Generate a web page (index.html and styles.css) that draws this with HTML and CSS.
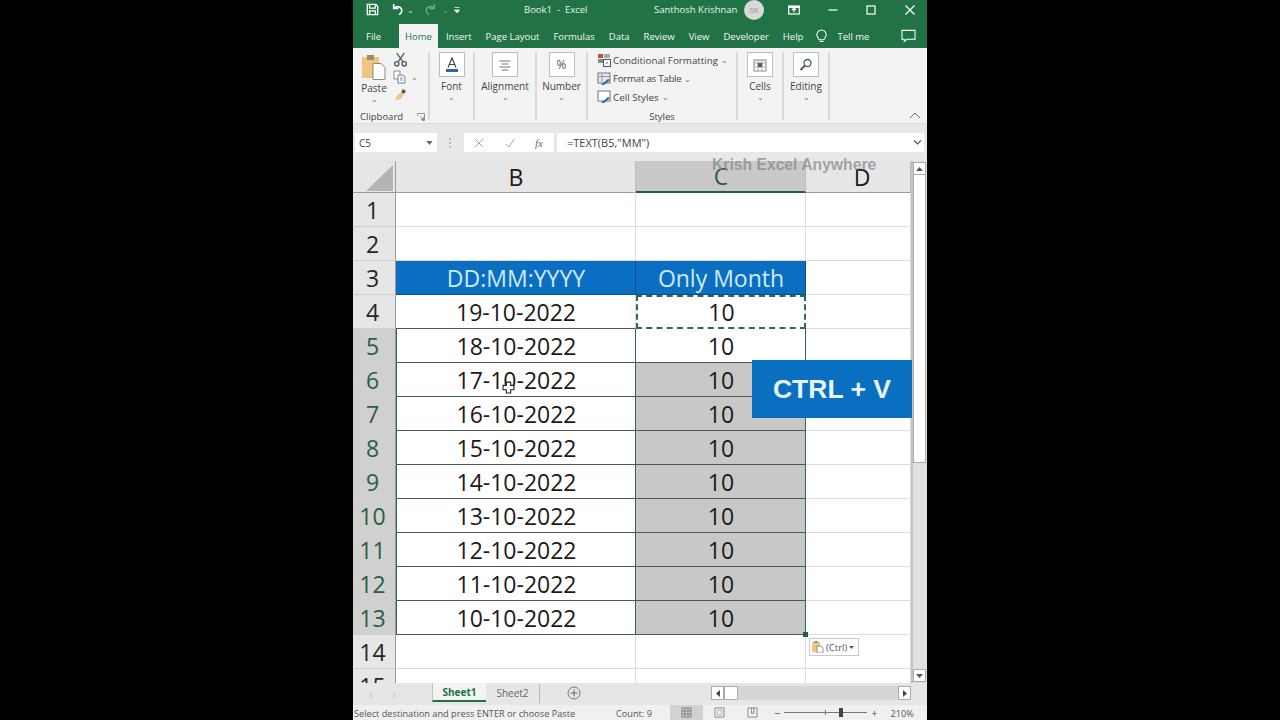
FILE: index.html
```html
<!DOCTYPE html>
<html lang="en">
<head>
<meta charset="utf-8">
<title>Book1 - Excel</title>
<link rel="stylesheet" href="styles.css">
</head>
<body>
<div class="app">
  <header class="titlebar">
    <div class="qat">
      <svg class="ic16" viewBox="0 0 16 16"><path d="M2.500 2.500h9l2 2v9h-11z" fill="none" stroke="#fff" stroke-width="1.500"/><path d="M5 3v3.500h6V3M5 13V9.500h6V13" fill="none" stroke="#fff" stroke-width="1.300"/></svg>
      <svg class="ic16 undo" viewBox="0 0 16 16"><path d="M5 2v5h5M5.500 6.500C8 4 12.500 4.500 13.500 8c.5 2.500-1 4.500-3 5.500" fill="none" stroke="#fff" stroke-width="1.700"/></svg>
      <span class="caret">&#8964;</span>
      <svg class="ic16 redo" viewBox="0 0 16 16"><path d="M11 2v5H6M10.500 6.500C8 4 3.500 4.500 2.500 8c-.5 2.500 1 4.500 3 5.500" fill="none" stroke="#6fa588" stroke-width="1.600"/></svg>
      <span class="caret faint">&#8964;</span>
      <svg class="ic8" viewBox="0 0 8 8"><path d="M1.500 1.500h5M1.500 4h5L4 7z" fill="#fff" stroke="#fff" stroke-width=".7"/></svg>
    </div>
    <div class="doc">Book1&nbsp; -&nbsp; Excel</div>
    <div class="user">Santhosh Krishnan</div>
    <div class="avatar">SK</div>
    <div class="winbtns">
      <svg class="ic12" viewBox="0 0 12 12"><rect x=".7" y="2" width="10.600" height="8" fill="none" stroke="#fff" stroke-width="1.200"/><path d="M6 8.500V4M4 6l2-2 2 2" fill="none" stroke="#fff" stroke-width="1.200"/><path d="M1 2h10v2H1z" fill="#fff"/></svg>
      <svg class="ic12" viewBox="0 0 12 12"><path d="M1.500 6h9" stroke="#fff" stroke-width="1.200"/></svg>
      <svg class="ic12" viewBox="0 0 12 12"><rect x="2" y="2" width="8" height="8" fill="none" stroke="#fff" stroke-width="1.200"/></svg>
      <svg class="ic12" viewBox="0 0 12 12"><path d="M1.500 1.500l9 9M10.500 1.500l-9 9" stroke="#fff" stroke-width="1.200"/></svg>
    </div>
  </header>

  <nav class="tabs">
    <span>File</span>
    <span class="active">Home</span>
    <span>Insert</span>
    <span>Page Layout</span>
    <span>Formulas</span>
    <span>Data</span>
    <span>Review</span>
    <span>View</span>
    <span>Developer</span>
    <span>Help</span>
    <svg class="bulb" viewBox="0 0 14 16"><path d="M4.500 11.500C3.500 9.500 2 8.500 2 6a5 5 0 0 1 10 0c0 2.500-1.500 3.500-2.500 5.500zM5 13.500h4" fill="none" stroke="#fff" stroke-width="1.100"/></svg>
    <span>Tell me</span>
    <svg class="comment" viewBox="0 0 16 14"><path d="M1 1h14v9.500H6L3.500 13v-2.500H1z" fill="none" stroke="#fff" stroke-width="1.100"/></svg>
  </nav>

  <section class="ribbon">
    <div class="grp clip">
      <div class="clip-main">
        <div class="clip-top">
          <div class="paste-col">
            <svg class="paste-ic" viewBox="0 0 26 26"><rect x="1" y="3" width="17" height="21" fill="#eec67f"/><rect x="6" y="1" width="7" height="5" fill="#9a8a70"/><path d="M12 9.500h8l4 4v12H12z" fill="#fff" stroke="#8a8a8a"/></svg>
            <span class="lbl">Paste</span>
            <span class="chev">&#8964;</span>
          </div>
          <div class="clip-tools">
            <svg class="ic16" viewBox="0 0 14 14"><circle cx="3.500" cy="11" r="2" fill="none" stroke="#3f5f7a" stroke-width="1.300"/><circle cx="10.500" cy="11" r="2" fill="none" stroke="#3f5f7a" stroke-width="1.300"/><path d="M4.500 9.500L10.500 1M9.500 9.500L3.500 1" stroke="#5a5a5a" stroke-width="1.200"/></svg>
            <div class="copyrow"><svg class="ic14" viewBox="0 0 14 14"><path d="M1 1h6v8H1z" fill="#fff" stroke="#8a8a8a"/><path d="M5 5h5l2 2v6H5z" fill="#fff" stroke="#6f7f8f"/><path d="M7 8h3M7 10h3" stroke="#6f8fb0"/></svg><span class="chev side">&#8964;</span></div>
            <svg class="ic14" viewBox="0 0 14 14"><path d="M8 5l2-3 3 2-2 3z" fill="#555"/><path d="M8 5l3 2-3 5-6 1 2-4z" fill="#eec67f"/></svg>
          </div>
        </div>
        <div class="grp-name clip-name"><span>Clipboard</span><svg class="launch" viewBox="0 0 8 8"><path d="M.5 3V.5h7v7H5M3 3l3.500 3.500M6.500 4v2.500H4" fill="none" stroke="#777" stroke-width=".8"/></svg></div>
      </div>
    </div>

    <div class="grp big font">
      <div class="bigbtn"><svg viewBox="0 0 16 16"><path d="M4 10.500L8 1l4 9.500M5.500 7.500h5" fill="none" stroke="#444" stroke-width="1.200"/><rect x="2" y="12" width="12" height="3" fill="#2a64b0"/></svg></div>
      <span class="lbl">Font</span><span class="chev">&#8964;</span>
    </div>
    <div class="grp big align">
      <div class="bigbtn"><svg viewBox="0 0 16 16"><path d="M2.500 4h11M4.500 7h7M2.500 10h11M4.500 13h7" stroke="#777" stroke-width="1"/></svg></div>
      <span class="lbl">Alignment</span><span class="chev">&#8964;</span>
    </div>
    <div class="grp big number">
      <div class="bigbtn pct">%</div>
      <span class="lbl">Number</span><span class="chev">&#8964;</span>
    </div>

    <div class="grp styles">
      <div class="style-list">
        <div class="style-row"><svg class="ic14" viewBox="0 0 14 14"><path d="M1 1h5v4H1z" fill="#b5533c"/><path d="M1 6h5v4H1z" fill="#8a8a8a"/><path d="M7 1h6v4H7z" fill="#aaa"/><rect x="6.500" y="6.500" width="7" height="7" fill="#fff" stroke="#555"/><path d="M9 11l2-2" stroke="#2a64b0"/></svg><span>Conditional Formatting</span><span class="chev side">&#8964;</span></div>
        <div class="style-row"><svg class="ic14" viewBox="0 0 14 14"><rect x="1" y="1" width="12" height="10" fill="#dfe8f2" stroke="#777"/><path d="M1 4.500h12M5 1v10" stroke="#999"/><path d="M4 13l7-6 2 1-6 5z" fill="#2a64b0"/></svg><span class="tight">Format as Table</span><span class="chev side">&#8964;</span></div>
        <div class="style-row"><svg class="ic14" viewBox="0 0 14 14"><rect x="1" y="1" width="12" height="10" fill="#fff" stroke="#777"/><path d="M4 13l7-6 2 1-6 5z" fill="#2a64b0"/></svg><span>Cell Styles</span><span class="chev side">&#8964;</span></div>
      </div>
      <div class="grp-name">Styles</div>
    </div>

    <div class="grp big cells">
      <div class="bigbtn"><svg viewBox="0 0 16 16"><rect x="2" y="3" width="12" height="11" fill="#fff" stroke="#888"/><path d="M2 6h12M6 3v11M10 3v11M2 10h12" stroke="#aaa"/><rect x="6" y="6" width="4" height="4" fill="#555"/></svg></div>
      <span class="lbl">Cells</span><span class="chev">&#8964;</span>
    </div>
    <div class="grp big editing">
      <div class="bigbtn"><svg viewBox="0 0 16 16"><circle cx="9.500" cy="6" r="3.500" fill="#fff" stroke="#3f5f7a" stroke-width="1.300"/><path d="M7 8.500L2.500 13" stroke="#555" stroke-width="2"/></svg></div>
      <span class="lbl">Editing</span><span class="chev">&#8964;</span>
    </div>
    <svg class="collapse" viewBox="0 0 12 7"><path d="M1 6l5-5 5 5" fill="none" stroke="#666"/></svg>
  </section>

  <section class="fbar">
    <div class="namebox"><span>C5</span><svg class="tri" viewBox="0 0 8 5"><path d="M0 0h8L4 5z" fill="#666"/></svg></div>
    <div class="grip"></div>
    <div class="fxbox">
      <svg class="ic10" viewBox="0 0 10 10"><path d="M1 1l8 8M9 1l-8 8" stroke="#aaa" stroke-width="1"/></svg>
      <svg class="ic10" viewBox="0 0 10 10"><path d="M1 6l3 3 5-8" fill="none" stroke="#aaa" stroke-width="1"/></svg>
      <span class="fx">fx</span>
    </div>
    <div class="finput"><span>=TEXT(B5,"MM")</span><svg class="down" viewBox="0 0 9 5"><path d="M1 .5l3.500 3.500L8 .5" fill="none" stroke="#555" stroke-width="1.200"/></svg></div>
  </section>

  <main class="workarea">
    <div class="sheet">
      <div class="rh corner"><span class="tri-corner"></span></div>
      <div class="ch">B</div>
      <div class="ch sel">C</div>
      <div class="ch dcol">D</div>

      <div class="rh">1</div><div class="c"></div><div class="c"></div><div class="c"></div>
      <div class="rh">2</div><div class="c"></div><div class="c"></div><div class="c"></div>
      <div class="rh">3</div><div class="c head">DD:MM:YYYY</div><div class="c head">Only Month</div><div class="c"></div>
      <div class="rh">4</div><div class="c above">19-10-2022</div><div class="c ants">10</div><div class="c"></div>
      <div class="rh sel">5</div><div class="c b">18-10-2022</div><div class="c s">10</div><div class="c"></div>
      <div class="rh sel">6</div><div class="c b">17-10-2022</div><div class="c s g">10</div><div class="c"></div>
      <div class="rh sel">7</div><div class="c b">16-10-2022</div><div class="c s g">10</div><div class="c"></div>
      <div class="rh sel">8</div><div class="c b">15-10-2022</div><div class="c s g">10</div><div class="c"></div>
      <div class="rh sel">9</div><div class="c b">14-10-2022</div><div class="c s g">10</div><div class="c"></div>
      <div class="rh sel">10</div><div class="c b">13-10-2022</div><div class="c s g">10</div><div class="c"></div>
      <div class="rh sel">11</div><div class="c b">12-10-2022</div><div class="c s g">10</div><div class="c"></div>
      <div class="rh sel">12</div><div class="c b">11-10-2022</div><div class="c s g">10</div><div class="c"></div>
      <div class="rh sel">13</div><div class="c b">10-10-2022</div><div class="c s g">10</div><div class="c"></div>
      <div class="rh">14</div><div class="c"></div><div class="c"></div><div class="c"></div>
      <div class="rh">15</div><div class="c"></div><div class="c"></div><div class="c"></div>
    </div>
    <div class="vscroll">
      <div class="sbtn"><svg viewBox="0 0 7 4"><path d="M0 4h7L3.500 0z" fill="#555"/></svg></div>
      <div class="vthumb"></div>
      <div class="vtrack"></div>
      <div class="sbtn"><svg viewBox="0 0 7 4"><path d="M0 0h7L3.500 4z" fill="#555"/></svg></div>
    </div>
    <div class="shortcut">CTRL + V</div>
    <div class="fill-handle"></div>
    <div class="pasteopt"><svg class="ic12" viewBox="0 0 12 12"><rect x="0" y="1" width="8" height="10" fill="#eec67f"/><rect x="2.500" y="0" width="3" height="2" fill="#888"/><path d="M5 5h4l2 2v5H5z" fill="#fff" stroke="#777" stroke-width=".8"/></svg><span>(Ctrl)</span><svg class="tri small" viewBox="0 0 8 5"><path d="M0 0h8L4 5z" fill="#555"/></svg></div>
    <svg class="cursor" viewBox="0 0 12 12"><path d="M4 1h4v3h3v4H8v3H4V8H1V4h3z" fill="#fff" stroke="#222" stroke-width="1"/></svg>
  </main>

  <section class="sheetbar">
    <div class="navs"><span>&#8249;</span><span>&#8250;</span></div>
    <div class="stab on">Sheet1</div>
    <div class="stab">Sheet2</div>
    <svg class="plus" viewBox="0 0 14 14"><circle cx="7" cy="7" r="6" fill="none" stroke="#777"/><path d="M7 3.500v7M3.500 7h7" stroke="#666"/></svg>
    <div class="hscroll">
      <div class="hbtn"><svg viewBox="0 0 4 7"><path d="M4 0v7L0 3.500z" fill="#444"/></svg></div>
      <div class="hthumb"></div>
      <div class="htrack"></div>
      <div class="hbtn"><svg viewBox="0 0 4 7"><path d="M0 0v7l4-3.500z" fill="#444"/></svg></div>
    </div>
  </section>

  <footer class="status">
    <span class="msg">Select destination and press ENTER or choose Paste</span>
    <span class="count">Count: 9</span>
    <div class="view on"><svg viewBox="0 0 12 12"><path d="M1 1h10v10H1zM1 4.300h10M1 7.700h10M4.300 1v10M7.700 1v10" fill="none" stroke="#777" stroke-width=".9"/></svg></div>
    <div class="view"><svg viewBox="0 0 12 12"><path d="M1 1h10v10H1z" fill="none" stroke="#777" stroke-width=".9"/><path d="M3.500 3.500h5v5h-5z" fill="none" stroke="#999" stroke-width=".8"/></svg></div>
    <div class="view"><svg viewBox="0 0 12 12"><path d="M1 1h10v10H1zM5 1v6h2.500V1" fill="none" stroke="#777" stroke-width=".9"/></svg></div>
    <div class="zoom">
      <span class="zsign">&#8722;</span>
      <div class="slider"><span class="mid"></span><span class="knob"></span></div>
      <span class="zsign">+</span>
      <span class="pct-val">210%</span>
    </div>
  </footer>
  <div class="watermark">Krish Excel Anywhere</div>
</div>
</body>
</html>
```

FILE: styles.css
```css
* { box-sizing: border-box; }
html, body { margin: 0; height: 720px; background: #000; overflow: hidden; }
body { display: flex; justify-content: center; font-family: "Open Sans", "Noto Sans", sans-serif; }
.app { width: 574px; height: 720px; display: flex; flex-direction: column; background: #e6e6e6; position: relative; overflow: hidden; }

/* title bar */
.titlebar { height: 24px; background: #217346; color: #e8f1ec; display: flex; align-items: center; font-size: 9.500px; flex: none; padding-bottom: 5px; }
.qat { display: flex; align-items: center; width: 171px; padding-left: 12px; }
.ic16 { width: 15px; height: 15px; flex: none; }
.ic14 { width: 14px; height: 14px; flex: none; }
.ic12 { width: 12px; height: 12px; flex: none; }
.ic10 { width: 10px; height: 10px; flex: none; }
.ic8 { width: 8px; height: 8px; flex: none; margin-left: 1px; }
.undo { margin-left: 9px; }
.redo { margin-left: 7px; }
.caret { font-size: 8px; line-height: 8px; width: 10px; margin-left: 3px; color: #d6e6dd; }
.caret.faint { color: #6fa588; }
.doc { width: 130px; white-space: nowrap; }
.user { width: 90px; white-space: nowrap; }
.avatar { width: 20px; height: 20px; border-radius: 50%; background: #d9d9d9; color: #9a8f8f; font-size: 8px; display: flex; align-items: center; justify-content: center; margin-right: 24px; }
.winbtns { display: flex; gap: 26.500px; }

/* tabs */
.tabs { height: 24px; flex: none; background: #217346; color: #f1f6f3; display: flex; align-items: center; gap: 14px; font-size: 9.500px; padding-left: 13px; white-space: nowrap; }
.tabs .active { background: #f3f3f3; color: #217346; align-self: stretch; display: flex; align-items: center; padding: 0 6px; margin-right: -6px; margin-left: 4px; }
.bulb { width: 13px; height: 15px; flex: none; margin-left: -2px; margin-right: -5px; }
.comment { width: 15px; height: 14px; flex: none; margin-left: 18px; }

/* ribbon */
.ribbon { height: 76px; flex: none; background: #f3f3f3; border-bottom: 1px solid #dcdcdc; display: flex; position: relative; color: #444; font-size: 10px; padding-top: 4px; }
.grp { height: 68px; border-right: 2px solid #d9d9d9; flex: none; display: flex; flex-direction: column; align-items: center; }
.clip { width: 77px; }
.clip-main { width: 100%; display: flex; flex-direction: column; height: 100%; }
.clip-top { display: flex; flex: none; height: 58px; padding-left: 8px; }
.paste-col { width: 26px; display: flex; flex-direction: column; align-items: center; }
.paste-ic { width: 26px; height: 26px; margin-top: 2px; }
.paste-col .lbl { margin-top: 2px; }
.clip-tools { display: flex; flex-direction: column; gap: 3px; margin-left: 6px; }
.copyrow { display: flex; align-items: center; gap: 3px; }
.lbl { font-size: 10px; line-height: 13px; white-space: nowrap; }
.chev { font-size: 8px; line-height: 8px; color: #777; display: block; }
.chev.side { margin-left: 1px; }
.grp-name { font-size: 9.500px; line-height: 13px; color: #444; text-align: center; flex: none; }
.clip-name { display: flex; justify-content: space-between; align-items: center; padding: 0 3px 0 7px; }
.launch { width: 8px; height: 8px; }
.font { width: 45px; }
.align { width: 62px; }
.number { width: 51px; }
.cells { width: 46px; }
.editing { width: 46px; }
.bigbtn { width: 26px; height: 25px; background: #fff; border: 1px solid #bdbdbd; display: flex; align-items: center; justify-content: center; margin-bottom: 3px; }
.bigbtn svg { width: 16px; height: 16px; }
.pct { font-size: 12px; color: #555; }
.styles { width: 150px; align-items: stretch; }
.style-list { height: 58px; flex: none; padding: 1px 0 0 9px; display: flex; flex-direction: column; gap: 4.500px; }
.style-row { display: flex; align-items: center; gap: 2px; font-size: 9.800px; height: 14px; white-space: nowrap; }
.tight { letter-spacing: -.3px; }
.collapse { position: absolute; right: 6px; bottom: 4px; width: 12px; height: 7px; }

/* formula bar */
.fbar { height: 37px; flex: none; background: #e8e8e8; display: flex; align-items: center; padding: 0 3px 0 2px; font-size: 10px; color: #444; }
.namebox { width: 82px; height: 19px; background: #fff; display: flex; align-items: center; justify-content: space-between; padding: 0 4px; }
.tri { width: 7px; height: 4px; }
.grip { width: 3px; height: 10px; margin: 0 12px; border-left: 2px dotted #bbb; }
.fxbox { width: 90px; height: 19px; background: #fff; display: flex; align-items: center; gap: 21px; padding-left: 10px; margin-right: 3px; }
.fx { font-family: "Liberation Serif", serif; font-style: italic; font-size: 11px; color: #666; margin-left: -1px; }
.finput { flex: 1; height: 19px; background: #fff; display: flex; align-items: center; justify-content: space-between; padding: 0 2px 0 10px; font-size: 11px; }
.down { width: 9px; height: 5px; }

/* sheet */
.workarea { height: 522px; flex: none; display: flex; position: relative; overflow: hidden; background: #fff; }
.sheet { width: 558px; display: grid; grid-template-columns: 43px 240px 170px 105px; grid-template-rows: 32px repeat(15, 34px); flex: none; font-size: 23px; color: #1a1a1a; background: #fff; align-content: start; height: 522px; overflow: hidden; }
.rh { background: #e6e6e6; border-right: 1px solid #9a9a9a; border-bottom: 1px solid #cfcfcf; display: flex; align-items: center; justify-content: center; color: #262626; padding-right: 3px; }
.rh.sel { background: #d0d0d0; color: #2a5f45; }
.corner { border-bottom: 1px solid #9a9a9a; justify-content: flex-end; align-items: flex-end; padding: 0 2px 1px 0; }
.tri-corner { width: 0; height: 0; border-style: solid; border-width: 0 0 26px 27px; border-color: transparent transparent #b4b4b4 transparent; }
.ch { background: #e6e6e6; border-right: 1px solid #bdbdbd; border-bottom: 1px solid #9a9a9a; display: flex; align-items: flex-end; justify-content: center; line-height: 29px; font-size: 23px; padding-left: 1px; }
.ch.dcol { padding-left: 8px; }
.ch.sel { background: #c9c9c9; color: #2a5f45; border-bottom: 2px solid #1f6145; }
.c { border-right: 1px solid #dcdcdc; border-bottom: 1px solid #dcdcdc; display: flex; align-items: center; justify-content: center; min-width: 0; padding-left: 1px; }
.c.head { background: #0a6fc2; color: #cfeafa; border-right-color: #0b4f8a; border-bottom-color: #0b4f8a; }
.c.above { border-bottom-color: #4a5a52; }
.c.b { border-bottom: 1px solid #4a5a52; border-right: 1px solid #2f6a4e; border-left: 1px solid #2f6a4e; }
.c.s { border-bottom: 1px solid #4a5a52; border-right: 1px solid #2f6a4e; }
.c.g { background: #c8c8c8; }
.c.ants { border: 2px dashed #2f6a4e; }

.vscroll { width: 16px; flex: none; background: #e0e0e0; border-left: 2px solid #c4c4c4; display: flex; flex-direction: column; padding: 1px 1px 1px 0; }
.sbtn { height: 13px; flex: none; background: #fff; border: 1px solid #aaa; display: flex; align-items: center; justify-content: center; }
.sbtn svg { width: 7px; height: 4px; }
.vthumb { height: 288px; flex: none; background: #fff; border: 1px solid #aaa; border-top: 0; }
.vtrack { flex: 1; }

.watermark { position: absolute; left: 359px; top: 156px; font: bold 15.700px "Liberation Sans", Arial, sans-serif; line-height: 18px; color: rgba(135,135,135,.72); white-space: nowrap; }
.shortcut { position: absolute; left: 399px; top: 199px; width: 160px; height: 58px; background: #0a6fc0; color: #e8f4fb; font: bold 26.500px "Liberation Sans", Arial, sans-serif; display: flex; align-items: center; justify-content: center; }
.fill-handle { position: absolute; left: 450px; top: 471px; width: 5px; height: 5px; background: #1f6145; }
.pasteopt { position: absolute; left: 456px; top: 477px; width: 50px; height: 18px; background: #fff; border: 1px solid #c8c8c8; display: flex; align-items: center; gap: 2px; padding-left: 2px; font-size: 9.500px; color: #555; }
.tri.small { width: 5px; height: 3px; }
.cursor { position: absolute; left: 149px; top: 220px; width: 13px; height: 13px; }

/* sheet tabs */
.sheetbar { height: 22px; flex: none; background: #e6e6e6; display: flex; align-items: stretch; font-size: 10px; color: #666; }
.navs { width: 79px; display: flex; gap: 20px; padding-left: 16px; align-items: center; color: #c4c4c4; font-size: 12px; }
.stab { width: 54px; display: flex; align-items: center; justify-content: center; border-right: 1px solid #b8b8b8; margin: 2px 0; padding-bottom: 2px; }
.stab.on { background: #f3f3f3; color: #217346; font-weight: 700; border-bottom: 2px solid #217346; margin: 0 0 3px; border-right: 0; border-left: 1px solid #c4c4c4; padding-bottom: 0; }
.plus { width: 14px; height: 14px; margin: 3px 0 0 27px; flex: none; }
.hscroll { width: 200px; margin: 0 0 2px 130px; display: flex; align-items: center; height: 14px; align-self: center; background: #d6d6d6; }
.hbtn { width: 13px; height: 14px; background: #fff; border: 1px solid #aaa; display: flex; align-items: center; justify-content: center; flex: none; }
.hbtn svg { width: 4px; height: 7px; }
.hthumb { width: 14px; height: 14px; background: #fff; border: 1px solid #aaa; flex: none; }
.htrack { flex: 1; }

/* status */
.status { height: 15px; flex: none; background: #f0f0f0; display: flex; align-items: center; font-size: 9.200px; color: #555; position: relative; white-space: nowrap; }
.msg { width: 263px; padding: 1px 0 0 1px; flex: none; }
.count { width: 54px; padding-top: 1px; flex: none; }
.view { width: 33px; height: 15px; display: flex; align-items: center; justify-content: center; flex: none; }
.view.on { background: #d2d2d2; }
.view svg { width: 11px; height: 11px; }
.zoom { display: flex; align-items: center; gap: 4px; margin-left: 5px; }
.zsign { font-size: 11px; line-height: 11px; color: #555; }
.slider { width: 83px; height: 1px; background: #777; position: relative; }
.mid { position: absolute; left: 41px; top: -2px; width: 1px; height: 5px; background: #777; }
.knob { position: absolute; left: 55px; top: -4px; width: 4px; height: 9px; background: #444; }
.pct-val { margin-left: 9px; padding-top: 1px; }
```
